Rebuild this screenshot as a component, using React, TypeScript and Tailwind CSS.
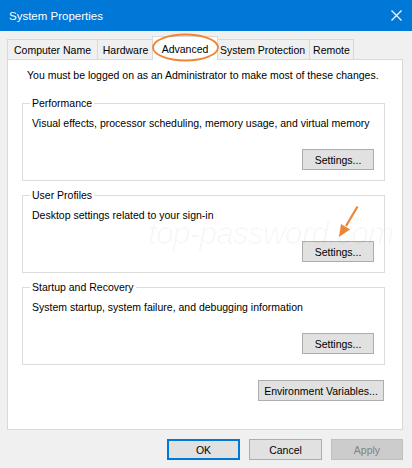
import React from "react";

function Btn({ children, w = "w-[72px]" }: { children: React.ReactNode; w?: string }) {
  return (
    <div className={`${w} h-[21px] bg-[#e1e1e1] border border-[#adadad] flex items-center justify-center`}>
      {children}
    </div>
  );
}

function Group({ title, desc }: { title: string; desc: string }) {
  return (
    <fieldset className="border border-[#dcdcdc] pl-[7px] pr-[10px] pb-[10px] mt-[7px]">
      <legend className="px-[2px] leading-[14px]">{title}</legend>
      <div className="pl-[2px] mt-[6px] leading-[14px]">{desc}</div>
      <div className="flex justify-end mt-[19px]">
        <Btn>Settings...</Btn>
      </div>
    </fieldset>
  );
}

export default function App() {
  const tabs = [
    { label: "Computer Name", w: "w-[91px]" },
    { label: "Hardware", w: "w-[57px]" },
    { label: "Advanced", w: "w-[66px]", sel: true },
    { label: "System Protection", w: "w-[95px]" },
    { label: "Remote", w: "w-[45px]" },
  ];
  return (
    <div className="relative w-[412px] h-[468px] bg-[#f0f0f0] font-['Liberation_Sans',Arial,sans-serif] text-[10.5px] leading-[14px] text-black overflow-hidden">
      <div className="h-[31px] bg-[#0078d7] flex items-center justify-between pl-[9px] pr-[10px]">
        <span className="text-white text-[11.5px]">System Properties</span>
        <svg width="11" height="11" viewBox="0 0 11 11">
          <path d="M0.5 0.5L10.5 10.5M10.5 0.5L0.5 10.5" stroke="white" strokeWidth="1.2" />
        </svg>
      </div>
      <div className="pl-[7px] pr-[9px] pt-[5px]">
        <div className="relative z-10 flex items-end h-[23px]">
          {tabs.map((t) =>
            t.sel ? (
              <div
                key={t.label}
                className={`${t.w} h-[24px] -mb-px -ml-[2px] -mr-[2px] bg-white border-t border-l border-r border-[#d9d9d9] flex items-center justify-center relative z-10`}
              >
                {t.label}
              </div>
            ) : (
              <div
                key={t.label}
                className={`${t.w} h-[20px] -ml-px first:ml-0 bg-[#f0f0f0] border-t border-l border-r border-[#d9d9d9] flex items-center justify-center`}
              >
                {t.label}
              </div>
            )
          )}
        </div>
        <div className="relative bg-white border border-[#d9d9d9] h-[371px] pt-[8px] pl-[14px] pr-[17px]">
          <div className="pl-[5px] leading-[14px]">
            You must be logged on as an Administrator to make most of these changes.
          </div>
          <div className="mt-[14px]">
            <fieldset className="border border-[#dcdcdc] pl-[7px] pr-[10px] pb-[10px]">
              <legend className="px-[2px] leading-[14px]">Performance</legend>
              <div className="pl-[2px] mt-[6px] leading-[14px]">
                Visual effects, processor scheduling, memory usage, and virtual memory
              </div>
              <div className="flex justify-end mt-[19px]">
                <Btn>Settings...</Btn>
              </div>
            </fieldset>
            <Group title="User Profiles" desc="Desktop settings related to your sign-in" />
            <Group
              title="Startup and Recovery"
              desc="System startup, system failure, and debugging information"
            />
          </div>
          <div className="flex justify-end mt-[15px] pr-[1px]">
            <Btn w="w-[126px]">Environment Variables...</Btn>
          </div>
          <div className="absolute left-[140px] top-[154px] italic text-[32px] leading-[38px] tracking-[-1px] text-[rgba(0,0,0,0.03)] pointer-events-none">
            top-password.com
          </div>
        </div>
        <div className="flex justify-end gap-[9px] mt-[9px]">
          <div className="w-[73px] h-[21px] bg-[#e1e1e1] border-2 border-[#0078d7] flex items-center justify-center">
            OK
          </div>
          <Btn w="w-[73px]">Cancel</Btn>
          <div className="w-[72px] h-[21px] bg-[#cccccc] border border-[#bfbfbf] text-[#838383] flex items-center justify-center">
            Apply
          </div>
        </div>
      </div>
      <svg className="absolute left-0 top-0 pointer-events-none z-20" width="412" height="468">
        <ellipse cx="185.5" cy="47.5" rx="32.5" ry="13" fill="none" stroke="#ef8434" strokeWidth="1.8" />
        <line x1="357.5" y1="206.5" x2="346" y2="226" stroke="#ef8434" strokeWidth="2.2" />
        <polygon points="339,237 350,229.5 341,224" fill="#ef8434" />
      </svg>
    </div>
  );
}
